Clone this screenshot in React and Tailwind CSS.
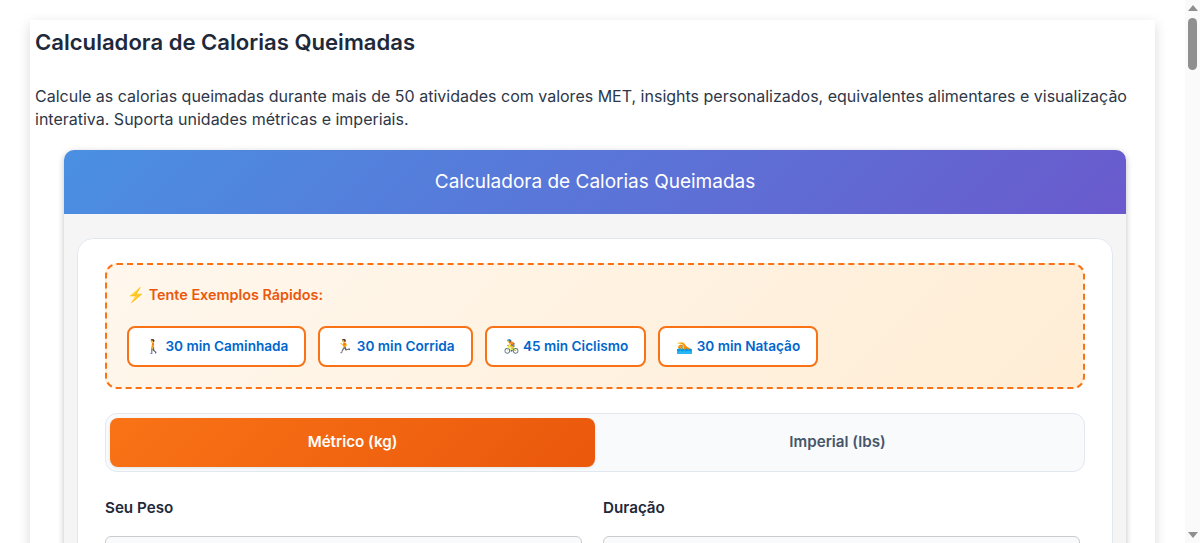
const examples = [
  { emoji: '🚶', label: '30 min Caminhada' },
  { emoji: '🏃', label: '30 min Corrida' },
  { emoji: '🚴', label: '45 min Ciclismo' },
  { emoji: '🏊', label: '30 min Natação' },
]

function App() {
  return (
    <div className="flex h-screen overflow-hidden bg-white font-['Inter',sans-serif] text-[#1e293b]">
      <div className="min-w-0 flex-1 overflow-hidden pt-5 pb-10 pl-[30px] pr-[30px]">
        <div className="bg-white p-[5px] shadow-[0_4px_12px_rgba(0,0,0,0.15)]">
          <h1 className="mt-[2px] text-[22.1px] leading-[30px] font-semibold text-[#1e293b]">
            Calculadora de Calorias Queimadas
          </h1>
          <p className="mt-[28px] text-base leading-[23px] text-[#2d3748]">
            Calcule as calorias queimadas durante mais de 50 atividades com valores MET, insights personalizados, equivalentes alimentares e visualização interativa. Suporta unidades métricas e imperiais.
          </p>

          <div className="mt-[19px] ml-[29px] mr-[24px] overflow-hidden rounded-[10px] bg-[#f5f5f5] shadow-[0_2px_6px_rgba(0,0,0,0.25)]">
            <div className="flex h-16 items-center justify-center bg-[linear-gradient(135deg,#4a90e2,#6a5acd)] text-[19px] text-white">
              Calculadora de Calorias Queimadas
            </div>

            <div className="px-[13px] pt-[24px] pb-10">
              <div className="rounded-2xl border border-[#e2e8f0] bg-white px-[27px] pt-[24px] pb-10">
                <div className="rounded-xl border-2 border-dashed border-[#f97316] bg-[linear-gradient(135deg,#fff7ed,#ffedd5)] px-5 pt-[20px] pb-5">
                  <div className="text-[14.4px] leading-5 font-semibold text-[#ea580c]">⚡ Tente Exemplos Rápidos:</div>
                  <div className="mt-[21px] flex gap-3">
                    {examples.map((ex) => (
                      <button
                        key={ex.label}
                        className="flex h-[41px] items-center rounded-lg border-2 border-[#f97316] bg-white px-4 text-[13.6px] font-semibold whitespace-pre text-[#0066cc]"
                      >
                        {ex.emoji} {ex.label}
                      </button>
                    ))}
                  </div>
                </div>

                <div className="mt-6 flex rounded-xl border border-[#e2e8f0] bg-[#f8fafc] p-1">
                  <button className="h-[49px] flex-1 rounded-lg bg-[linear-gradient(135deg,#f97316,#ea580c)] text-[15.2px] font-semibold text-white shadow-[0_1px_3px_rgba(0,0,0,0.1)]">
                    Métrico (kg)
                  </button>
                  <button className="h-[49px] flex-1 rounded-lg text-[15.2px] font-semibold text-[#475569]">
                    Imperial (lbs)
                  </button>
                </div>

                <div className="mt-[24px] grid grid-cols-[477px_477px] gap-[21px]">
                  <div>
                    <label className="block text-[15.2px] leading-6 font-semibold text-[#1e293b]">Seu Peso</label>
                    <input className="mt-4 h-12 w-full rounded-md border border-[#cbcbcb] bg-[#f8fafc]" />
                  </div>
                  <div>
                    <label className="block text-[15.2px] leading-6 font-semibold text-[#1e293b]">Duração</label>
                    <input className="mt-4 h-12 w-full rounded-md border border-[#cbcbcb] bg-[#f8fafc]" />
                  </div>
                </div>
              </div>
            </div>
          </div>
        </div>
      </div>

      {/* page scrollbar */}
      <div className="flex w-[15px] shrink-0 flex-col items-center bg-[#fafafa] py-[5px]">
        <svg width="10" height="6" viewBox="0 0 10 6"><path d="M5 0 L10 6 L0 6 Z" fill="#8f8f8f" /></svg>
        <div className="mt-[7px] h-[52px] w-[9px] rounded-[5px] bg-[#8f8f8f]" />
        <div className="flex-1" />
        <svg width="10" height="6" viewBox="0 0 10 6"><path d="M0 0 L10 0 L5 6 Z" fill="#8f8f8f" /></svg>
      </div>
    </div>
  )
}

export default App
